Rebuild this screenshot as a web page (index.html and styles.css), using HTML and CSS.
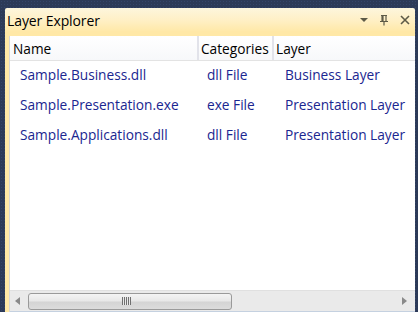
FILE: index.html
```html
<!DOCTYPE html>
<html>
<head>
<meta charset="utf-8">
<link rel="stylesheet" href="styles.css">
</head>
<body>
<div class="window">
  <div class="titlebar">
    <span class="title">Layer Explorer</span>
    <div class="tools">
      <svg class="tool" width="10" height="10" viewBox="0 0 10 10"><path d="M1 3 H9 L5 7 Z" fill="#5d5a47"/></svg>
      <svg class="tool" width="12" height="12" viewBox="0 0 12 12"><path d="M3 1.5 H9 M4 1.5 V7 M8 1.5 V7 M5 1.5 V7 M2 7.5 H10 M6 7.5 V11.5" stroke="#5d5a47" stroke-width="1.2" fill="none"/></svg>
      <svg class="tool" width="12" height="12" viewBox="0 0 12 12"><path d="M2 2 L10 10 M10 2 L2 10" stroke="#5d5a47" stroke-width="1.6" fill="none"/></svg>
    </div>
  </div>
  <div class="frame">
    <div class="content">
      <div class="header">
        <div class="hcell c1">Name</div>
        <div class="hcell c2">Categories</div>
        <div class="hcell c3">Layer</div>
      </div>
      <div class="rows">
        <div class="row"><span class="c1">Sample.Business.dll</span><span class="c2">dll File</span><span class="c3">Business Layer</span></div>
        <div class="row"><span class="c1">Sample.Presentation.exe</span><span class="c2">exe File</span><span class="c3">Presentation Layer</span></div>
        <div class="row"><span class="c1">Sample.Applications.dll</span><span class="c2">dll File</span><span class="c3">Presentation Layer</span></div>
      </div>
      <div class="hscroll">
        <svg class="arrow" width="6" height="8" viewBox="0 0 6 8"><path d="M5 0 V8 L0 4 Z" fill="#8a8a8a"/></svg>
        <div class="track">
          <div class="thumb"><span class="grip"></span></div>
        </div>
        <svg class="arrow" width="6" height="8" viewBox="0 0 6 8"><path d="M1 0 V8 L6 4 Z" fill="#8a8a8a"/></svg>
      </div>
    </div>
  </div>
</div>
</body>
</html>
```

FILE: styles.css
```css
html, body {
  margin: 0;
  padding: 0;
  height: 312px;
  overflow: hidden;
}
body {
  background: #2c3a58;
  background-image: radial-gradient(#34456a 1px, transparent 1px);
  background-size: 3px 3px;
  font-family: "Open Sans", "Noto Sans", sans-serif;
  padding: 8px 3px 0 5px;
}
.window {
  display: flex;
  flex-direction: column;
  height: 304px;
  border-radius: 2px 2px 0 0;
  overflow: hidden;
}
.titlebar {
  height: 24px;
  display: flex;
  align-items: center;
  justify-content: space-between;
  background: linear-gradient(#fdf6dd, #fff0c6 50%, #ffe8a6);
  padding: 0 4px 0 2px;
}
.title {
  font-size: 14px;
  color: #000;
  letter-spacing: -0.1px;
}
.tools {
  display: flex;
  align-items: center;
  gap: 9px;
  padding-right: 0;
}
.tool { display: block; }
.frame {
  flex: 1;
  background: #ffe8a6;
  padding: 4px 0 0 4px;
  display: flex;
}
.content {
  flex: 1;
  background: #fff;
  display: flex;
  flex-direction: column;
  border-left: 1px solid #d6d6d6;
}
.header {
  display: flex;
  height: 24px;
  border-bottom: 1px solid #e3e3e3;
  background: linear-gradient(#ffffff, #f7f8fa);
}
.hcell {
  font-size: 13.7px;
  color: #000;
  display: flex;
  align-items: center;
  padding-left: 3px;
  box-sizing: border-box;
}
.header .c1 { width: 189px; border-right: 2px solid #e2e3ea; }
.header .c2 { width: 75px; border-right: 2px solid #e2e3ea; padding-left: 2px; }
.header .c3 { flex: 1; padding-left: 2px; }
.rows {
  flex: 1;
}
.row {
  height: 30px;
  box-sizing: border-box;
  padding-bottom: 4px;
  display: flex;
  align-items: center;
  font-size: 13.7px;
  color: #1a2690;
}
.row .c1 { width: 189px; padding-left: 10px; box-sizing: border-box; }
.row .c2 { width: 76px; padding-left: 8px; box-sizing: border-box; }
.row .c3 { padding-left: 10px; }
.hscroll {
  height: 20px;
  background: #eaeaea;
  border-top: 1px solid #e0e0e0;
  display: flex;
  align-items: center;
  padding: 0 8px 0 5px;
  border-bottom: 1px solid #c5d1e0;
}
.arrow { display: block; }
.track {
  flex: 1;
  padding: 0 8px 0 7px;
  height: 18px;
  display: flex;
  align-items: center;
}
.thumb {
  width: 204px;
  height: 17px;
  box-sizing: border-box;
  border: 1px solid #9a9a9a;
  border-radius: 3px;
  background: linear-gradient(#f4f4f4, #e8e8e8 45%, #d4d4d4 55%, #dcdcdc);
  display: flex;
  align-items: center;
  justify-content: center;
}
.grip {
  width: 9px;
  height: 8px;
  background: repeating-linear-gradient(90deg, #707070 0 1px, #e8e8e8 1px 2px);
  margin-left: -8px;
}
```
